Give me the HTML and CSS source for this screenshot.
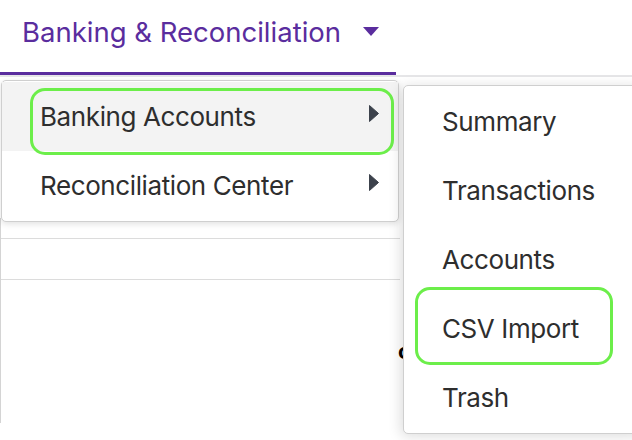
FILE: index.html
```html
<!DOCTYPE html>
<html lang="en">
<head>
<meta charset="utf-8">
<title>Banking &amp; Reconciliation</title>
<link rel="stylesheet" href="styles.css">
</head>
<body>
<div class="tabbar">
  <div class="tab">
    <span class="tab-label">Banking &amp; Reconciliation</span>
    <svg class="caret" width="16" height="9" viewBox="0 0 16 9"><path d="M0 0H16L8 9Z" fill="#5a2d9e"/></svg>
  </div>
</div>
<div class="page">
  <div class="row row-first"></div>
  <div class="row"></div>
  <div class="row row-text"><span class="cell-text">co</span></div>
</div>

<div class="menu menu-main">
  <div class="item item-hover">
    <span>Banking Accounts</span>
    <svg class="arrow" width="10" height="17" viewBox="0 0 10 17"><path d="M0.5 0.5L9.5 8.5L0.5 16.5Z" fill="#3c424c" stroke="#3c424c" stroke-linejoin="round"/></svg>
    <span class="mark mark-banking"></span>
  </div>
  <div class="item">
    <span>Reconciliation Center</span>
    <svg class="arrow" width="10" height="17" viewBox="0 0 10 17"><path d="M0.5 0.5L9.5 8.5L0.5 16.5Z" fill="#3c424c" stroke="#3c424c" stroke-linejoin="round"/></svg>
  </div>
</div>

<div class="menu menu-sub">
  <div class="item"><span>Summary</span></div>
  <div class="item"><span>Transactions</span></div>
  <div class="item"><span>Accounts</span></div>
  <div class="item"><span>CSV Import</span><span class="mark mark-csv"></span></div>
  <div class="item"><span>Trash</span></div>
</div>
</body>
</html>
```
FILE: styles.css
```css
html, body {
  margin: 0;
  padding: 0;
  background: #ffffff;
  font-family: "Inter", "Liberation Sans", sans-serif;
  overflow: hidden;
}
body {
  width: 632px;
  height: 440px;
  position: relative;
}
.tabbar {
  height: 75px;
  border-bottom: 2px solid #e6e6e8;
  display: flex;
}
.tab {
  width: 396px;
  height: 72px;
  border-bottom: 3px solid #5a2d9e;
  display: flex;
  align-items: flex-start;
  box-sizing: content-box;
}
.tab-label {
  margin-left: 22px;
  margin-top: 15px;
  font-size: 27.5px;
  line-height: 34px;
  color: #5a2d9e;
  letter-spacing: 0;
  white-space: nowrap;
}
.caret {
  margin-left: 22px;
  margin-top: 27px;
  flex: none;
}
.page {
  margin-top: 141px;
  border-left: 1px solid #d4d4d4;
  width: 399px;
  height: 205px;
}
.row {
  height: 40px;
  border-bottom: 1px solid #dcdcdc;
}
.row-first {
  height: 20px;
}
.row-text {
  border-bottom: none;
  height: 100px;
  position: relative;
}
.cell-text {
  display: block;
  padding-left: 397px;
  padding-top: 58px;
  font-weight: 700;
  font-size: 22px;
  color: #000;
}
.menu {
  position: absolute;
  background: #fff;
  border: 1px solid #cfcfcf;
  border-radius: 5px;
  padding: 1px 0;
  box-shadow: 0 2px 6px rgba(0, 0, 0, 0.12);
}
.menu-main {
  left: 1px;
  top: 80px;
  width: 396px;
  z-index: 1;
}
.menu-sub {
  left: 403px;
  top: 85px;
  width: 240px;
  z-index: 2;
  box-shadow: -2px 2px 14px rgba(0, 0, 0, 0.14);
}
.item {
  position: relative;
  height: 69px;
  display: flex;
  align-items: center;
  padding-left: 38px;
  padding-right: 19px;
  font-size: 26px;
  letter-spacing: -0.4px;
  color: #2e2e2e;
}
.item span:first-child {
  flex: 1;
}
.item-hover {
  background: #f3f3f3;
}
.arrow {
  margin-top: -6px;
}
.mark {
  position: absolute;
  border: 3px solid #6cee4a;
  border-radius: 15px;
  box-sizing: border-box;
}
.mark-banking {
  left: 28px;
  top: 6px;
  width: 364px;
  height: 67px;
}
.mark-csv {
  left: 11px;
  top: -7px;
  width: 198px;
  height: 78px;
}
```
